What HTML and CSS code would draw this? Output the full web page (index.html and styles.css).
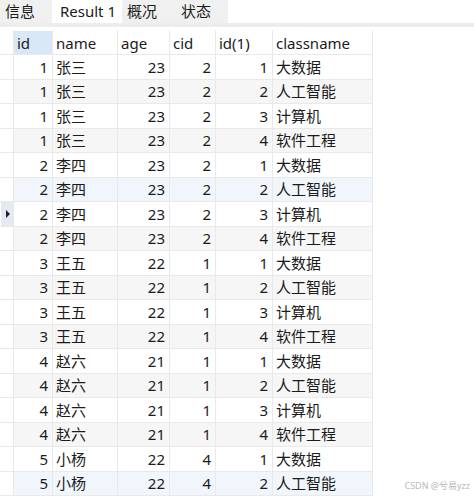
FILE: index.html
```html
<!DOCTYPE html>
<html lang="zh">
<head>
<meta charset="utf-8">
<link rel="stylesheet" href="styles.css">
</head>
<body>
<div class="tabs">
  <div class="tab tab-info">信息</div>
  <div class="tab active">Result 1</div>
  <div class="tab tab-gk">概况</div>
  <div class="tab tab-zt">状态</div>
</div>
<div class="grid-wrap">
<table class="grid">
  <colgroup>
    <col class="c-ind"><col class="c-id"><col class="c-name"><col class="c-age"><col class="c-cid"><col class="c-id1"><col class="c-cls">
  </colgroup>
  <thead>
    <tr><th class="ind"></th><th class="sel">id</th><th>name</th><th>age</th><th>cid</th><th>id(1)</th><th>classname</th></tr>
  </thead>
  <tbody>
    <tr><td class="ind"></td><td class="n">1</td><td>张三</td><td class="n">23</td><td class="n">2</td><td class="n">1</td><td>大数据</td></tr>
    <tr class="alt"><td class="ind"></td><td class="n">1</td><td>张三</td><td class="n">23</td><td class="n">2</td><td class="n">2</td><td>人工智能</td></tr>
    <tr><td class="ind"></td><td class="n">1</td><td>张三</td><td class="n">23</td><td class="n">2</td><td class="n">3</td><td>计算机</td></tr>
    <tr class="alt"><td class="ind"></td><td class="n">1</td><td>张三</td><td class="n">23</td><td class="n">2</td><td class="n">4</td><td>软件工程</td></tr>
    <tr><td class="ind"></td><td class="n">2</td><td>李四</td><td class="n">23</td><td class="n">2</td><td class="n">1</td><td>大数据</td></tr>
    <tr class="blue"><td class="ind"></td><td class="n">2</td><td>李四</td><td class="n">23</td><td class="n">2</td><td class="n">2</td><td>人工智能</td></tr>
    <tr class="cur"><td class="ind"><span class="arrow"></span></td><td class="n">2</td><td>李四</td><td class="n">23</td><td class="n">2</td><td class="n">3</td><td>计算机</td></tr>
    <tr class="alt"><td class="ind"></td><td class="n">2</td><td>李四</td><td class="n">23</td><td class="n">2</td><td class="n">4</td><td>软件工程</td></tr>
    <tr><td class="ind"></td><td class="n">3</td><td>王五</td><td class="n">22</td><td class="n">1</td><td class="n">1</td><td>大数据</td></tr>
    <tr class="alt"><td class="ind"></td><td class="n">3</td><td>王五</td><td class="n">22</td><td class="n">1</td><td class="n">2</td><td>人工智能</td></tr>
    <tr><td class="ind"></td><td class="n">3</td><td>王五</td><td class="n">22</td><td class="n">1</td><td class="n">3</td><td>计算机</td></tr>
    <tr class="alt"><td class="ind"></td><td class="n">3</td><td>王五</td><td class="n">22</td><td class="n">1</td><td class="n">4</td><td>软件工程</td></tr>
    <tr><td class="ind"></td><td class="n">4</td><td>赵六</td><td class="n">21</td><td class="n">1</td><td class="n">1</td><td>大数据</td></tr>
    <tr class="alt"><td class="ind"></td><td class="n">4</td><td>赵六</td><td class="n">21</td><td class="n">1</td><td class="n">2</td><td>人工智能</td></tr>
    <tr><td class="ind"></td><td class="n">4</td><td>赵六</td><td class="n">21</td><td class="n">1</td><td class="n">3</td><td>计算机</td></tr>
    <tr class="alt"><td class="ind"></td><td class="n">4</td><td>赵六</td><td class="n">21</td><td class="n">1</td><td class="n">4</td><td>软件工程</td></tr>
    <tr><td class="ind"></td><td class="n">5</td><td>小杨</td><td class="n">22</td><td class="n">4</td><td class="n">1</td><td>大数据</td></tr>
    <tr class="blue"><td class="ind"></td><td class="n">5</td><td>小杨</td><td class="n">22</td><td class="n">4</td><td class="n">2</td><td>人工智能</td></tr>
  </tbody>
</table>
<div class="watermark">CSDN @兮易yzz</div>
</div>
</body>
</html>
```

FILE: styles.css
```css
html, body {
  margin: 0;
  padding: 0;
  background: #ffffff;
  overflow: hidden;
}
body {
  width: 474px;
  height: 497px;
  font-family: "Noto Sans", "Noto Sans CJK SC", sans-serif;
  color: #1b1b1b;
  font-size: 15px;
}
.tabs {
  display: flex;
  height: 23px;
  border-bottom: 4px solid #ededed;
}
.tab {
  height: 23px;
  line-height: 23px;
  background: #f0f0f0;
  padding: 0 5px;
  box-sizing: border-box;
}
.tab-info { width: 52px; }
.tab.active {
  background: #ffffff;
  width: 70px;
  padding-left: 8px;
}
.tab-gk { width: 49px; padding-left: 5px; }
.tab-zt { width: 57px; padding-left: 10px; }
.grid-wrap {
  position: relative;
  padding-top: 3px;
  height: 470px;
}
.grid {
  border-collapse: collapse;
  table-layout: fixed;
  width: 372px;
}
.c-ind { width: 13px; }
.c-id { width: 39px; }
.c-name { width: 65px; }
.c-age { width: 52px; }
.c-cid { width: 46px; }
.c-id1 { width: 57px; }
.c-cls { width: 100px; }
th, td {
  height: 24.5px;
  padding: 0 3px;
  border: 1px solid #e9e9e9;
  white-space: nowrap;
  overflow: hidden;
  box-sizing: border-box;
  line-height: 22px;
}
th {
  height: 24px;
  font-weight: normal;
  text-align: left;
  background: #ffffff;
  border-top-color: #ffffff;
}
th.sel { background: #d9e8f7; }
th.ind { border-left-color: #fff; border-top-color: #fff; }
td.ind { border-left-color: #fff; background: #ffffff; padding: 0; position: relative; }
td.n { text-align: right; padding-right: 4px; }
tr.alt td { background: #f6f6f6; }
tr.blue td { background: #f0f6fc; }
tr.alt td.ind, tr.blue td.ind { background: #ffffff; }
tr.cur td.ind { background: #e3eaf2; }
.arrow {
  position: absolute;
  left: 5px;
  top: 8px;
  width: 0;
  height: 0;
  border-top: 4px solid transparent;
  border-bottom: 4px solid transparent;
  border-left: 4px solid #222;
}
.watermark {
  position: absolute;
  right: 4px;
  bottom: 8px;
  font-size: 9px;
  color: #b8b8b8;
}
```
